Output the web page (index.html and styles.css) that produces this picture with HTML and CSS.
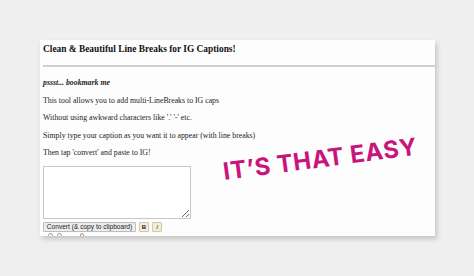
FILE: index.html
```html
<!DOCTYPE html>
<html>
<head>
<meta charset="utf-8">
<link rel="stylesheet" href="styles.css">
</head>
<body>
<div class="stage">
  <div class="card">
    <h1 class="title">Clean &amp; Beautiful Line Breaks for IG Captions!</h1>
    <div class="rule"></div>
    <div class="content">
      <p class="bookmark">pssst... bookmark me</p>
      <p>This tool allows you to add multi-LineBreaks to IG caps</p>
      <p>Without using awkward characters like '.' '-' etc.</p>
      <p>Simply type your caption as you want it to appear (with line breaks)</p>
      <p>Then tap 'convert' and paste to IG!</p>
      <textarea class="caption"></textarea>
      <div class="actions">
        <button class="btn convert">Convert (&amp; copy to clipboard)</button>
        <button class="btn fmt bold">B</button>
        <button class="btn fmt ital">I</button>
      </div>
      <div class="icons">
        <span class="dot"></span><span class="dot"></span><span class="dot small"></span>
      </div>
    </div>
    <div class="promo">IT’S THAT EASY</div>
  </div>
</div>
</body>
</html>
```
FILE: styles.css
```css
html, body {
  margin: 0;
  padding: 0;
  background: #efefef;
}
.stage {
  width: 474px;
  height: 276px;
  padding: 40px 0 0 40px;
  box-sizing: border-box;
}
.card {
  position: relative;
  width: 395px;
  height: 196px;
  background: #fdfdfd;
  box-shadow: 2px 3px 5px rgba(0,0,0,0.18);
  overflow: hidden;
  font-family: "Liberation Serif", "Times New Roman", serif;
  color: #222;
}
.title {
  margin: 0;
  padding: 3px 0 0 3px;
  font-size: 9.4px;
  line-height: 13px;
  font-weight: bold;
  color: #111;
}
.rule {
  margin: 9px 0 0 3px;
  height: 2px;
  background: #cfcfcf;
}
.content {
  padding: 11px 0 0 3px;
}
.content p {
  margin: 0 0 7.4px 0;
  font-size: 7.8px;
  line-height: 10px;
}
.content p.bookmark {
  font-weight: bold;
  font-style: italic;
  margin-bottom: 8px;
}
.caption {
  display: block;
  margin: 3px 0 0 0;
  width: 148px;
  height: 53px;
  box-sizing: border-box;
  border: 1px solid #c8c8c8;
  background: #fff;
  resize: both;
  padding: 0;
}
.actions {
  display: flex;
  gap: 3px;
  margin-top: 3px;
  height: 10px;
}
.btn {
  margin: 0;
  padding: 0 3px;
  height: 10px;
  font-family: "Liberation Sans", Arial, sans-serif;
  font-size: 6.6px;
  line-height: 8px;
  color: #222;
  border: 1px solid #bdbdbd;
  border-radius: 1px;
  background: #ececec;
  white-space: nowrap;
}
.convert {
  width: 93px;
  padding: 0;
}
.fmt {
  width: 10px;
  padding: 0;
  background: #f4ecd6;
  border-color: #d2c7a8;
  font-size: 6px;
}
.bold { font-weight: bold; }
.ital { font-style: italic; }
.icons {
  display: flex;
  gap: 4px;
  margin: 1px 0 0 5px;
}
.dot {
  width: 5px;
  height: 5px;
  border-radius: 50%;
  border: 1px solid #999;
  box-sizing: border-box;
}
.dot.small {
  margin-left: 14px;
  width: 4px;
}
.promo {
  position: absolute;
  left: 185px;
  top: 119px;
  font-family: "Inter", "Open Sans", sans-serif;
  font-weight: 700;
  font-size: 24px;
  line-height: 26px;
  letter-spacing: 0.5px;
  color: #c8157d;
  white-space: nowrap;
  transform: rotate(-7.5deg);
  transform-origin: 0 100%;
}
```
